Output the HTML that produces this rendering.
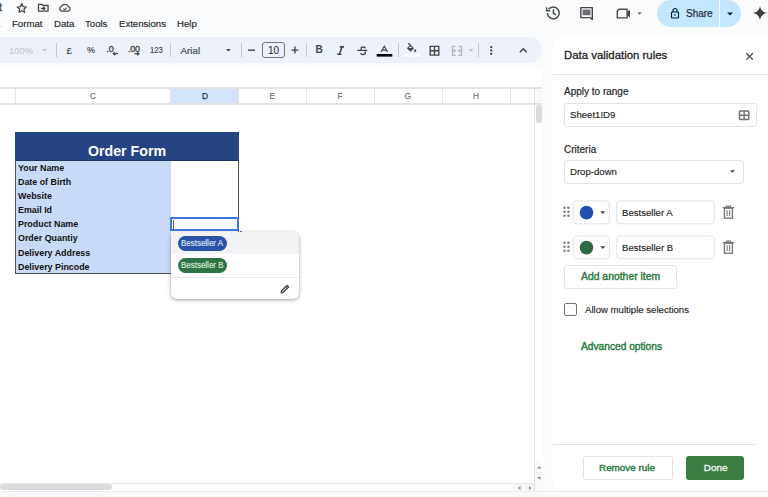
<!DOCTYPE html>
<html><head><meta charset="utf-8">
<style>
*{box-sizing:border-box;margin:0;padding:0}
html,body{width:768px;height:497px;overflow:hidden;background:#f9fbfd;font-family:"Liberation Sans",sans-serif;color:#1f1f1f}
.a{position:absolute}
.t{position:absolute;white-space:nowrap;line-height:1}
svg{position:absolute;overflow:visible}
</style></head><body>

<!-- title row -->
<div class="t" style="left:-1.2px;top:1.5px;font-size:11.5px;color:#444;-webkit-text-stroke:0.5px #444">t</div>
<svg style="left:0;top:0" width="768" height="30" viewBox="0 0 768 30">
<path d="M21.8 3.6 L23.1 6.7 L26.3 7 L23.9 9.2 L24.6 12.3 L21.8 10.7 L19 12.3 L19.7 9.2 L17.3 7 L20.5 6.7 Z" fill="none" stroke="#444746" stroke-width="1.25" stroke-linejoin="round"/>
<path d="M38.5 4.4 h3.5 l1.2 1.1 h4.9 v5.7 h-9.6 z" fill="none" stroke="#444746" stroke-width="1.3" stroke-linejoin="round"/>
<path d="M40.9 8.4 h3.6" stroke="#444746" stroke-width="1.3"/><path d="M43.2 6.8 l1.7 1.6 -1.7 1.6" fill="none" stroke="#444746" stroke-width="1.3"/>
<path d="M61.9 11.1 A2.4 2.4 0 0 1 61.5 6.4 A3.9 3.9 0 0 1 68.6 6.9 A2.15 2.15 0 0 1 68.4 11.1 Z" fill="none" stroke="#444746" stroke-width="1.3" stroke-linejoin="round"/>
<path d="M63.3 8.6 l1.2 1.2 2.2 -2.2" fill="none" stroke="#444746" stroke-width="1.1"/>
<!-- history -->
<path d="M548.6 9.3 A5.9 5.9 0 1 1 547.4 13" fill="none" stroke="#444746" stroke-width="1.45"/>
<path d="M546.6 7.2 v3.6 h3.6" fill="none" stroke="#444746" stroke-width="1.45"/>
<path d="M553.4 9.3 v3.9 l2.6 1.7" fill="none" stroke="#444746" stroke-width="1.45"/>
<!-- comment -->
<path d="M580.8 7.6 h11.5 v12 l-2.2 -2 h-9.3 z" fill="none" stroke="#444746" stroke-width="1.4" stroke-linejoin="round"/>
<rect x="582.6" y="9.6" width="7.9" height="5.6" fill="#6d6f72"/>
<!-- video -->
<path d="M619.5 9.3 h7.6 v8.6 h-9.8 v-6.4 a2.2 2.2 0 0 1 2.2 -2.2z" fill="none" stroke="#444746" stroke-width="1.4" stroke-linejoin="round"/>
<path d="M627 12 l3 -2.3 v7.8 l-3 -2.3z" fill="#444746"/>
<path d="M637.4 12.5 h4.3 l-2.15 2z" fill="#444746"/>
</svg>
<!-- menu -->
<div class="t" style="left:-2.2px;top:18.6px;font-size:9.6px;color:#666">t</div>
<div class="t" style="left:12px;top:18.6px;font-size:9.6px;color:#1f1f1f;-webkit-text-stroke:0.15px #1f1f1f">Format</div>
<div class="t" style="left:54px;top:18.6px;font-size:9.6px;color:#1f1f1f;-webkit-text-stroke:0.15px #1f1f1f">Data</div>
<div class="t" style="left:85px;top:18.6px;font-size:9.6px;color:#1f1f1f;-webkit-text-stroke:0.15px #1f1f1f">Tools</div>
<div class="t" style="left:119px;top:18.6px;font-size:9.6px;color:#1f1f1f;-webkit-text-stroke:0.15px #1f1f1f">Extensions</div>
<div class="t" style="left:177px;top:18.6px;font-size:9.6px;color:#1f1f1f;-webkit-text-stroke:0.15px #1f1f1f">Help</div>

<!-- share -->
<div class="a" style="left:657px;top:0;width:84px;height:27px;border-radius:14px;background:#c2e7ff"></div>
<div class="a" style="left:719px;top:0;width:1px;height:27px;background:#f9fbfd"></div>
<svg style="left:670px;top:7px" width="10" height="12" viewBox="0 0 20 24"><rect x="3" y="10" width="14" height="12" rx="1.5" fill="none" stroke="#001d35" stroke-width="2.4"/><path d="M6 10V7a4 4 0 0 1 8 0v3" fill="none" stroke="#001d35" stroke-width="2.4"/><circle cx="10" cy="16" r="1.6" fill="#001d35"/></svg>
<div class="t" style="left:686px;top:8.7px;font-size:10px;color:#2a3340;-webkit-text-stroke:0.25px #2a3340">Share</div>
<svg style="left:727px;top:12px" width="6" height="4" viewBox="0 0 10 5"><path d="M0 0h10L5 5z" fill="#001d35"/></svg>
<svg style="left:752px;top:5px" width="16" height="16" viewBox="0 0 24 24"><path d="M12 1C12.5 7 17 11.5 23 12 17 12.5 12.5 17 12 23 11.5 17 7 12.5 1 12 7 11.5 11.5 7 12 1z" fill="#3a3c3e"/></svg>

<!-- toolbar -->
<div class="a" style="left:-20px;top:37px;width:562px;height:26px;border-radius:13px;background:#edf2fa"></div>
<div class="t" style="left:9px;top:46px;font-size:9.4px;color:#c4c7cc;-webkit-text-stroke:0.15px #c4c7cc">100%</div>
<svg style="left:42.2px;top:49px" width="5" height="2.7" viewBox="0 0 10 5"><path d="M0 0h10L5 5z" fill="#c4c7cc"/></svg>
<div class="a" style="left:56px;top:43px;width:1px;height:14px;background:#c7c7c7"></div>
<div class="t" style="left:66.5px;top:46px;font-size:9.5px;color:#444746;-webkit-text-stroke:0.2px #444746">£</div>
<div class="t" style="left:87px;top:46px;font-size:9px;color:#444746;-webkit-text-stroke:0.2px #444746">%</div>
<div class="t" style="left:106.3px;top:45.2px;font-size:9px;color:#444746;-webkit-text-stroke:0.35px #444746">.0</div>
<svg style="left:0;top:0" width="200" height="60" viewBox="0 0 200 60"><path d="M118 53.7 H113.6 M115.1 52.2 L113.4 53.7 L115.1 55.2" fill="none" stroke="#444746" stroke-width="1.3"/><path d="M134.4 53.7 H138.8 M137.3 52.2 L139 53.7 L137.3 55.2" fill="none" stroke="#444746" stroke-width="1.3"/></svg>
<div class="t" style="left:128px;top:45.2px;font-size:9px;color:#444746;-webkit-text-stroke:0.35px #444746;letter-spacing:-0.3px">.00</div>

<div class="t" style="left:150px;top:46.3px;font-size:8.3px;color:#444746;-webkit-text-stroke:0.15px #444746;transform:scaleX(0.93);transform-origin:0 0">123</div>
<div class="a" style="left:170px;top:43px;width:1px;height:14px;background:#c7c7c7"></div>
<div class="t" style="left:180.5px;top:45.6px;font-size:9.8px;color:#4a4c4e;-webkit-text-stroke:0.2px #4a4c4e">Arial</div>
<svg style="left:225.6px;top:48.6px" width="4.8" height="2.6" viewBox="0 0 10 5"><path d="M0 0h10L5 5z" fill="#444746"/></svg>
<div class="a" style="left:241px;top:43px;width:1px;height:14px;background:#c7c7c7"></div>
<div class="a" style="left:262px;top:42px;width:23px;height:16px;border:1px solid #747775;border-radius:3px"></div>
<div class="t" style="left:268px;top:46px;font-size:10px;color:#1f1f1f">10</div>
<div class="a" style="left:306px;top:43px;width:1px;height:14px;background:#c7c7c7"></div>
<div class="t" style="left:315.5px;top:45.2px;font-size:10px;color:#444746;font-weight:bold">B</div>
<div class="a" style="left:398px;top:43px;width:1px;height:14px;background:#c7c7c7"></div>
<div class="a" style="left:478px;top:43px;width:1px;height:14px;background:#c7c7c7"></div>

<svg style="left:0;top:30px" width="768" height="40" viewBox="0 30 768 40">
<path d="M248 50.2 h7" stroke="#444746" stroke-width="1.4"/>
<path d="M291.4 50.1 h7 M294.9 46.6 v7" stroke="#444746" stroke-width="1.4"/>
<path d="M339.8 46.9 h4.2 M337.2 54.3 h4.2 M342 46.9 l-2.6 7.4" fill="none" stroke="#444746" stroke-width="1.6"/>
<path d="M365.6 48.2 c-0.3 -0.8 -1.2 -1.2 -2.3 -1.2 c-1.3 0 -2.3 0.6 -2.3 1.5 c0 0.4 0.2 0.8 0.6 1.1 M357.3 50.3 h10 M364.8 51.6 c0.4 0.3 0.6 0.7 0.6 1.2 c0 1 -1 1.7 -2.4 1.7 c-1.2 0 -2.2 -0.5 -2.5 -1.3" fill="none" stroke="#444746" stroke-width="1.3"/>
<path d="M381 52 L384.3 46.3 L387.6 52 M382.2 50.2 h4.2" fill="none" stroke="#444746" stroke-width="1.2"/>
<rect x="376.7" y="54" width="15.6" height="2.6" fill="#000"/>
<path d="M406.9 48.2 L410.5 44.7 L414.1 48.2 L410.5 51.8 Z" fill="#444746"/>
<path d="M408.7 47.9 L410.5 46.3 L412.3 47.9 Z" fill="#f4f7fc"/>
<path d="M408.2 43.2 L410.9 45.8" stroke="#444746" stroke-width="1.3"/>
<path d="M415.2 49.1 c0.5 0.8 1.1 1.3 1.1 1.9 a1.1 1.1 0 0 1 -2.2 0 c0 -0.6 0.6 -1.1 1.1 -1.9z" fill="#444746"/>
<rect x="404.2" y="54" width="15.4" height="2.6" fill="#fff"/>
<path d="M430.2 46.3 h8.6 v8.8 h-8.6 z M434.5 46.3 v8.8 M430.2 50.7 h8.6" fill="none" stroke="#444746" stroke-width="1.35"/>
<path d="M455.6 46.4 H452.5 V55.2 H455.6 M458.4 46.4 H461.5 V55.2 H458.4" fill="none" stroke="#b5babe" stroke-width="1.4"/>
<path d="M451.4 50.8 H455.3 M453.9 49.3 L455.4 50.8 L453.9 52.3 M462.6 50.8 H458.7 M460.1 49.3 L458.6 50.8 L460.1 52.3" fill="none" stroke="#b5babe" stroke-width="1.2"/>
<path d="M468.8 49.3 h4.6 l-2.3 2.3z" fill="#b5babe"/>
<circle cx="491.2" cy="47.2" r="1.15" fill="#444746"/>
<circle cx="491.2" cy="50.5" r="1.15" fill="#444746"/>
<circle cx="491.2" cy="53.8" r="1.15" fill="#444746"/>
<path d="M519.8 52.3 l3.5 -3.6 l3.5 3.6" fill="none" stroke="#444746" stroke-width="1.45"/>
</svg>
<!-- formula band -->
<div class="a" style="left:0;top:63px;width:542px;height:6px;background:#f9fbfd"></div>
<!-- grid area -->
<div class="a" style="left:0;top:69px;width:542px;height:422px;background:#fff"></div>

<!-- column header -->
<div class="a" style="left:0;top:87px;width:542px;height:18px;background:#fff"></div>
<div class="a" style="left:170px;top:88px;width:69px;height:16px;background:#d3e3fd"></div>
<div class="a" style="left:535px;top:88px;width:7px;height:16px;background:#f8f9fa"></div>
<div class="a" style="left:0;top:87px;width:542px;height:2px;background:#e3e3e3"></div>
<div class="a" style="left:0;top:103px;width:542px;height:1.6px;background:#e3e3e3"></div>
<div class="a" style="left:14.5px;top:88px;width:1.5px;height:16px;background:#e1e1e1"></div>
<div class="a" style="left:170px;top:88px;width:1px;height:16px;background:#e1e1e1"></div>
<div class="a" style="left:238px;top:88px;width:1px;height:16px;background:#e1e1e1"></div>
<div class="a" style="left:306px;top:88px;width:1px;height:16px;background:#e1e1e1"></div>
<div class="a" style="left:374px;top:88px;width:1px;height:16px;background:#e1e1e1"></div>
<div class="a" style="left:442px;top:88px;width:1px;height:16px;background:#e1e1e1"></div>
<div class="a" style="left:509.5px;top:88px;width:1px;height:16px;background:#e1e1e1"></div>
<div class="t" style="left:90px;top:92px;font-size:8.4px;color:#606367;-webkit-text-stroke:0.1px #606367">C</div>
<div class="t" style="left:202px;top:92px;font-size:8.4px;color:#283553;-webkit-text-stroke:0.25px #283553">D</div>
<div class="t" style="left:269.5px;top:92px;font-size:8.4px;color:#606367;-webkit-text-stroke:0.1px #606367">E</div>
<div class="t" style="left:337.5px;top:92px;font-size:8.4px;color:#606367;-webkit-text-stroke:0.1px #606367">F</div>
<div class="t" style="left:404.5px;top:92px;font-size:8.4px;color:#606367;-webkit-text-stroke:0.1px #606367">G</div>
<div class="t" style="left:473px;top:92px;font-size:8.4px;color:#606367;-webkit-text-stroke:0.1px #606367">H</div>
<!-- vertical scrollbar -->
<div class="a" style="left:534px;top:88px;width:1px;height:403px;background:#e1e1e1"></div>
<div class="a" style="left:536px;top:105px;width:5.5px;height:17.5px;border-radius:3px;background:#dadce0"></div>
<div class="a" style="left:535px;top:461px;width:7px;height:30px;background:#f8f9fa"></div>
<svg style="left:536.5px;top:465.5px" width="4.5" height="2.5" viewBox="0 0 10 6"><path d="M0 6L5 0l5 6z" fill="#8a8d90"/></svg>
<div class="a" style="left:535px;top:471.5px;width:7px;height:1px;background:#e8e8e8"></div>
<svg style="left:536.5px;top:477px" width="4.5" height="2.5" viewBox="0 0 10 6"><path d="M0 0h10L5 6z" fill="#8a8d90"/></svg>
<!-- horizontal scrollbar -->
<div class="a" style="left:0;top:482.5px;width:535px;height:1px;background:#e8e8e8"></div>
<div class="a" style="left:0;top:484px;width:112px;height:6px;border-radius:3px;background:#dadce0"></div>
<div class="a" style="left:513px;top:483.5px;width:10.5px;height:7.5px;background:#f5f6f7"></div>
<div class="a" style="left:524.5px;top:483.5px;width:9.5px;height:7.5px;background:#f5f6f7"></div>
<svg style="left:518px;top:485.5px" width="2.5" height="4" viewBox="0 0 6 10"><path d="M6 0v10L0 5z" fill="#8a8d90"/></svg>
<svg style="left:528.5px;top:485.5px" width="2.5" height="4" viewBox="0 0 6 10"><path d="M0 0v10l6-5z" fill="#8a8d90"/></svg>
<div class="a" style="left:0;top:491px;width:768px;height:6px;background:#f8f9fa;border-top:1.5px solid #ebedef"></div>

<!-- order form -->
<div class="a" style="left:15px;top:132px;width:224px;height:142px;border:1px solid #505050;background:#fff"></div>
<div class="a" style="left:15px;top:132px;width:224px;height:29px;background:#254582;border-bottom:1px solid #1d3565"></div>
<div class="t" style="left:88px;top:144px;font-size:14.2px;color:#fff;font-weight:bold">Order Form</div>
<div class="a" style="left:16px;top:161px;width:155px;height:112px;background:#c9daf8"></div>
<div class="t" style="left:18px;top:161px;font-size:8.9px;font-weight:bold;line-height:14.1px;color:#111">Your Name<br>Date of Birth<br>Website<br>Email Id<br>Product Name<br>Order Quantiy<br>Delivery Address<br>Delivery Pincode</div>
<!-- selected cell -->
<div class="a" style="left:170px;top:217px;width:69px;height:14px;border:2px solid #4278dc"></div>
<div class="a" style="left:173px;top:219.5px;width:1px;height:9px;background:#666"></div>
<div class="a" style="left:239.5px;top:230.5px;width:2px;height:2px;background:#3c78d8"></div>

<!-- popup -->
<div class="a" style="left:171px;top:232px;width:128px;height:67px;border-radius:6px;background:#fff;box-shadow:0 1px 3px rgba(0,0,0,.3),0 1px 6px rgba(0,0,0,.12);overflow:hidden">
  <div class="a" style="left:0;top:0;width:128px;height:22px;background:#f1f3f4"></div>
  <div class="a" style="left:0;top:44.5px;width:128px;height:1px;background:#e8eaed"></div>
</div>
<div class="a" style="left:177.5px;top:236px;width:49.5px;height:15px;border-radius:7.5px;background:#2a52a8"></div>
<div class="t" style="left:181.3px;top:238.5px;font-size:8.8px;color:#dfe8f8;-webkit-text-stroke:0.15px #dfe8f8;transform:scaleX(0.905);transform-origin:0 0">Bestseller A</div>
<div class="a" style="left:177.5px;top:258px;width:49.5px;height:15px;border-radius:7.5px;background:#2f7448"></div>
<div class="t" style="left:181.3px;top:260.5px;font-size:8.8px;color:#d8eed6;-webkit-text-stroke:0.15px #d8eed6;transform:scaleX(0.905);transform-origin:0 0">Bestseller B</div>
<svg style="left:280px;top:283.5px" width="10" height="10" viewBox="0 0 20 20"><path d="M2.5 17.5l.8-4L14 2.8l3.2 3.2L6.5 16.7z" fill="none" stroke="#444746" stroke-width="2.8" stroke-linejoin="round"/><path d="M12 5l3 3" stroke="#444746" stroke-width="2"/></svg>

<!-- side panel -->
<div class="a" style="left:553px;top:37px;width:230px;height:453px;border-radius:8px;background:#fff"></div>
<div class="t" style="left:564px;top:50px;font-size:11.4px;color:#1f1f1f;-webkit-text-stroke:0.3px #1f1f1f">Data validation rules</div>
<svg style="left:0;top:0" width="768" height="130" viewBox="0 0 768 130"><path d="M746.3 53.2 l6.6 6.4 M752.9 53.2 l-6.6 6.4" stroke="#444746" stroke-width="1.3"/><rect x="739.5" y="111" width="9.3" height="8.4" rx="0.8" fill="none" stroke="#6f7275" stroke-width="1.5"/><path d="M744.15 111 v8.4 M739.5 115.2 h9.3" stroke="#6f7275" stroke-width="1.4"/></svg>
<div class="a" style="left:553px;top:74px;width:215px;height:1px;background:#e3e3e3"></div>
<div class="t" style="left:564px;top:87px;font-size:10px;color:#1f1f1f;-webkit-text-stroke:0.2px #1f1f1f">Apply to range</div>
<div class="a" style="left:564px;top:103px;width:193px;height:24px;border:1px solid #e1e3e6;border-radius:3px"></div>
<div class="t" style="left:570px;top:110px;font-size:9.6px;color:#1f1f1f;-webkit-text-stroke:0.15px #1f1f1f">Sheet1!D9</div>

<div class="t" style="left:564px;top:145px;font-size:10px;color:#1f1f1f;-webkit-text-stroke:0.2px #1f1f1f">Criteria</div>
<div class="a" style="left:564px;top:160px;width:180px;height:23.5px;border:1px solid #e1e3e6;border-radius:3px"></div>
<div class="t" style="left:570px;top:167px;font-size:9.6px;color:#1f1f1f;-webkit-text-stroke:0.15px #1f1f1f">Drop-down</div>
<svg style="left:730px;top:170.3px" width="5" height="3" viewBox="0 0 10 5"><path d="M0 0h10L5 5z" fill="#444746"/></svg>

<!-- items -->
<svg style="left:0;top:0" width="768" height="300" viewBox="0 0 768 300"><g transform="translate(0 0)">
<g fill="#7a7c7f"><circle cx="564.5" cy="207.7" r="1.25"/><circle cx="568.4" cy="207.7" r="1.25"/><circle cx="564.5" cy="211.7" r="1.25"/><circle cx="568.4" cy="211.7" r="1.25"/><circle cx="564.5" cy="215.7" r="1.25"/><circle cx="568.4" cy="215.7" r="1.25"/></g>
<rect x="573.7" y="201" width="35.6" height="22.8" rx="3" fill="none" stroke="#e0e2e5" stroke-width="1"/>
<circle cx="586.5" cy="212.6" r="6.8" fill="#2150b0"/>
<path d="M600.2 211.2 h5.1 l-2.55 2.8z" fill="#444746"/>
<rect x="616.7" y="201" width="97.6" height="22.8" rx="3" fill="none" stroke="#e0e2e5" stroke-width="1"/>
<g fill="none" stroke="#75787b"><path d="M722.8 207.6 h11.2" stroke-width="1.3"/><path d="M726.3 207.3 v-1.2 h4.2 v1.2" stroke-width="1.1"/><rect x="724.4" y="208.2" width="8" height="10" stroke-width="1.35"/><path d="M727.1 210.3 v5.8 M729.7 210.3 v5.8" stroke-width="1.1"/></g>
</g></svg>
<div class="t" style="left:622px;top:208px;font-size:9.6px;color:#1f1f1f;-webkit-text-stroke:0.15px #1f1f1f">Bestseller A</div>
<svg style="left:0;top:0" width="768" height="300" viewBox="0 0 768 300"><g transform="translate(0 35)">
<g fill="#7a7c7f"><circle cx="564.5" cy="207.7" r="1.25"/><circle cx="568.4" cy="207.7" r="1.25"/><circle cx="564.5" cy="211.7" r="1.25"/><circle cx="568.4" cy="211.7" r="1.25"/><circle cx="564.5" cy="215.7" r="1.25"/><circle cx="568.4" cy="215.7" r="1.25"/></g>
<rect x="573.7" y="201" width="35.6" height="22.8" rx="3" fill="none" stroke="#e0e2e5" stroke-width="1"/>
<circle cx="586.5" cy="212.6" r="6.8" fill="#2d6b46"/>
<path d="M600.2 211.2 h5.1 l-2.55 2.8z" fill="#444746"/>
<rect x="616.7" y="201" width="97.6" height="22.8" rx="3" fill="none" stroke="#e0e2e5" stroke-width="1"/>
<g fill="none" stroke="#75787b"><path d="M722.8 207.6 h11.2" stroke-width="1.3"/><path d="M726.3 207.3 v-1.2 h4.2 v1.2" stroke-width="1.1"/><rect x="724.4" y="208.2" width="8" height="10" stroke-width="1.35"/><path d="M727.1 210.3 v5.8 M729.7 210.3 v5.8" stroke-width="1.1"/></g>
</g></svg>
<div class="t" style="left:622px;top:243px;font-size:9.6px;color:#1f1f1f;-webkit-text-stroke:0.15px #1f1f1f">Bestseller B</div>

<div class="a" style="left:564px;top:265px;width:113px;height:24px;border:1px solid #e1e3e6;border-radius:3px"></div>
<div class="t" style="left:581px;top:272px;font-size:10.4px;color:#2a7b3b;-webkit-text-stroke:0.4px #2a7b3b">Add another item</div>
<div class="a" style="left:564px;top:303px;width:13px;height:13px;border:1.6px solid #6f7276;border-radius:2px"></div>
<div class="t" style="left:585px;top:305px;font-size:9.6px;color:#1f1f1f;-webkit-text-stroke:0.15px #1f1f1f">Allow multiple selections</div>
<div class="t" style="left:581px;top:342px;font-size:10.2px;color:#2a7b3b;-webkit-text-stroke:0.4px #2a7b3b">Advanced options</div>

<div class="a" style="left:553px;top:444px;width:202px;height:1px;background:#e3e3e3"></div>
<div class="a" style="left:583px;top:456px;width:90px;height:24px;border:1px solid #e1e3e6;border-radius:3px"></div>
<div class="t" style="left:599px;top:463px;font-size:9.9px;color:#2a7b3b;-webkit-text-stroke:0.4px #2a7b3b">Remove rule</div>
<div class="a" style="left:686px;top:456px;width:58px;height:24px;border-radius:3px;background:#3a7d44"></div>
<div class="t" style="left:703.8px;top:462.5px;font-size:9.9px;color:#f2f2f2;-webkit-text-stroke:0.35px #f2f2f2">Done</div>

</body></html>
